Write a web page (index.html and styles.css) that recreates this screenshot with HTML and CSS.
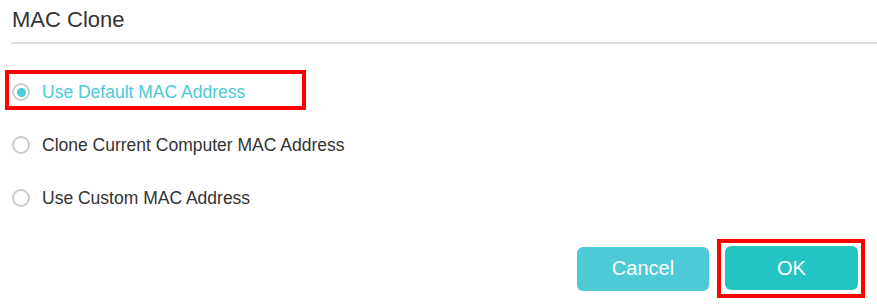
FILE: index.html
```html
<!DOCTYPE html>
<html>
<head>
<meta charset="utf-8">
<link rel="stylesheet" href="styles.css">
</head>
<body>
<div class="panel">
  <div class="header"><h1 class="title">MAC Clone</h1></div>
  <div class="options">
    <div class="option option-highlight option-checked">
      <span class="radio radio-checked"></span>
      <span class="label">Use Default MAC Address</span>
    </div>
    <div class="option">
      <span class="radio"></span>
      <span class="label">Clone Current Computer MAC Address</span>
    </div>
    <div class="option">
      <span class="radio"></span>
      <span class="label">Use Custom MAC Address</span>
    </div>
  </div>
  <div class="actions">
    <button class="btn btn-cancel">Cancel</button>
    <div class="ok-wrap"><button class="btn btn-ok">OK</button></div>
  </div>
</div>
</body>
</html>
```
FILE: styles.css
```css
html, body {
  margin: 0;
  padding: 0;
  background: #ffffff;
}
body {
  font-family: "Liberation Sans", Arial, sans-serif;
  width: 877px;
  height: 305px;
  overflow: hidden;
}
.header {
  margin-left: 11px;
  padding: 7px 0 10px 1px;
  border-bottom: 2px solid #dcdcdc;
}
.title {
  margin: 0;
  font-size: 22px;
  font-weight: normal;
  line-height: 25px;
  color: #333333;
}
.options {
  display: flex;
  flex-direction: column;
  gap: 13px;
  margin-top: 26px;
  margin-left: 5px;
}
.option {
  box-sizing: border-box;
  height: 40px;
  width: 301px;
  border: 4px solid transparent;
  padding: 4px 0 0 3px;
  display: flex;
  align-items: center;
  gap: 12px;
  white-space: nowrap;
}
.option-highlight {
  border-color: #ff0000;
}
.radio {
  box-sizing: border-box;
  width: 18px;
  height: 18px;
  border: 2px solid #cccccc;
  border-radius: 50%;
  background: #ffffff;
  display: flex;
  align-items: center;
  justify-content: center;
  flex: none;
}
.radio-checked::after {
  content: "";
  width: 9px;
  height: 9px;
  border-radius: 50%;
  background: #4acbd6;
}
.label {
  font-size: 17.5px;
  color: #333333;
}
.option-checked .label {
  color: #4acbd6;
}
.actions {
  display: flex;
  justify-content: flex-end;
  align-items: center;
  gap: 8px;
  margin-top: 23px;
  margin-right: 12px;
}
.btn {
  width: 133px;
  height: 44px;
  border: none;
  border-radius: 6px;
  color: #ffffff;
  font-family: "Liberation Sans", Arial, sans-serif;
  font-size: 20px;
  padding: 0;
}
.btn-cancel {
  width: 132px;
  background: #4dcad6;
}
.btn-ok {
  background: #23c5c3;
  display: block;
}
.ok-wrap {
  border: 4px solid #ff0000;
  padding: 3px 3px 4px 4px;
}
```
